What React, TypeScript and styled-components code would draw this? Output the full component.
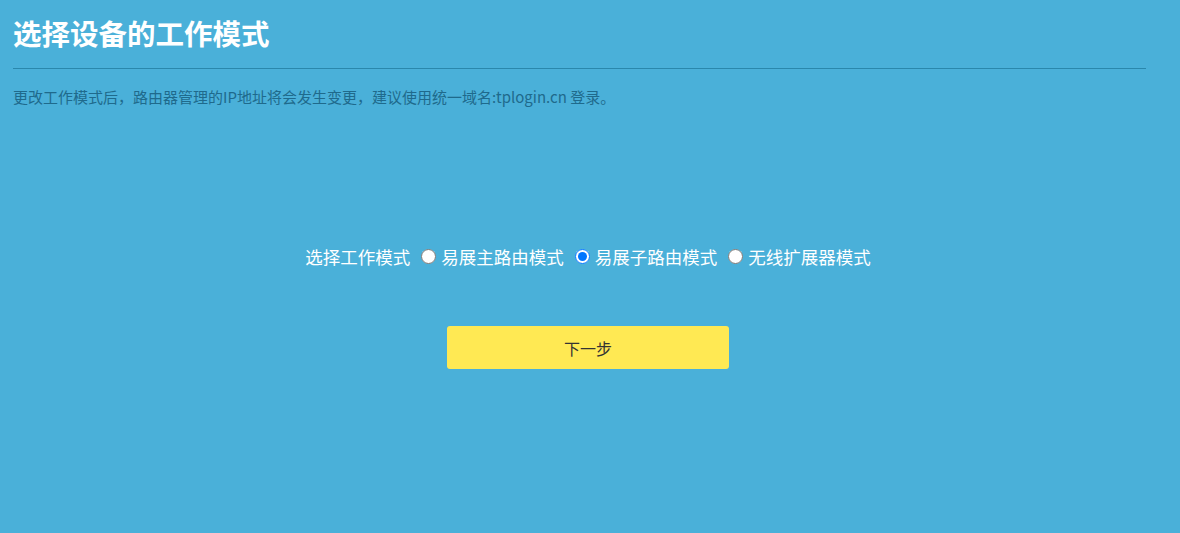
import * as React from "react";
import styled, { createGlobalStyle } from "styled-components";

const GlobalStyle = createGlobalStyle`
  html, body {
    margin: 0;
    padding: 0;
    background: #4ab0d9;
  }
  body {
    font-family: "Noto Sans CJK SC", "Liberation Sans", sans-serif;
  }
`;

const Page = styled.div`
  width: 1180px;
  height: 533px;
  background: #4ab0d9;
  box-sizing: border-box;
  padding: 0 13px;
`;

const Title = styled.h1`
  margin: 0;
  padding-top: 13px;
  height: 44px;
  font-size: 28.5px;
  line-height: 40px;
  font-weight: bold;
  color: #ffffff;
`;

const Divider = styled.hr`
  margin: 11px 21px 0 0;
  border: none;
  border-top: 1px solid #2a87ac;
`;

const Notice = styled.p`
  margin: 18px 0 0;
  font-size: 15px;
  line-height: 20px;
  color: #1f6a8c;
`;

const ModeRow = styled.div`
  margin-top: 137px;
  display: flex;
  justify-content: center;
  align-items: center;
  font-size: 17.5px;
  line-height: 26px;
  color: #ffffff;
  padding-right: 4px;
`;

const Option = styled.label`
  display: inline-flex;
  align-items: center;
  cursor: pointer;
`;

const Radio = styled.input`
  width: 15px;
  height: 15px;
  margin: 0 5px 1px 11px;
`;

const Actions = styled.div`
  margin-top: 56px;
  display: flex;
  justify-content: center;
  padding-right: 4px;
`;

const NextButton = styled.button`
  width: 282px;
  height: 43px;
  border: none;
  border-radius: 3px;
  background: #ffe953;
  color: #333333;
  font-family: "Noto Sans CJK SC", "Liberation Sans", sans-serif;
  font-size: 16px;
  cursor: pointer;
`;

const modes = ["易展主路由模式", "易展子路由模式", "无线扩展器模式"];

const App = () => {
  const [mode, setMode] = React.useState(1);
  return (
    <Page>
      <GlobalStyle />
      <Title>选择设备的工作模式</Title>
      <Divider />
      <Notice>
        更改工作模式后，路由器管理的IP地址将会发生变更，建议使用统一域名:tplogin.cn 登录。
      </Notice>
      <ModeRow>
        <span>选择工作模式</span>
        {modes.map((m, i) => (
          <Option key={m}>
            <Radio
              type="radio"
              name="mode"
              checked={mode === i}
              onChange={() => setMode(i)}
            />
            {m}
          </Option>
        ))}
      </ModeRow>
      <Actions>
        <NextButton>下一步</NextButton>
      </Actions>
    </Page>
  );
};

export default App;
